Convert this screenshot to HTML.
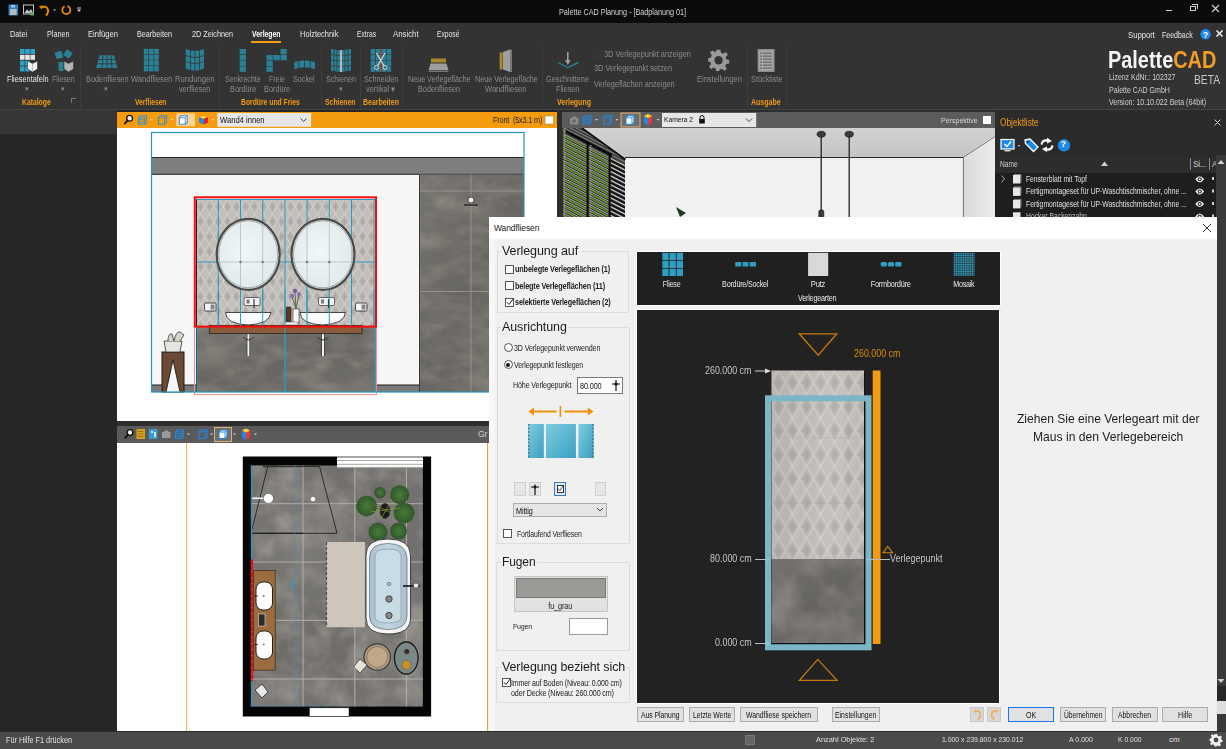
<!DOCTYPE html>
<html><head><meta charset="utf-8">
<style>
*{box-sizing:border-box}
html,body{margin:0;padding:0}
body{width:1226px;height:749px;overflow:hidden;position:relative;background:#262626;font-family:"Liberation Sans",sans-serif;}
.a{position:absolute}
.t{position:absolute;white-space:nowrap;line-height:1}
svg{position:absolute;overflow:hidden}
/* ribbon */
.rl{position:absolute;white-space:nowrap;font-size:8px;color:#8e8e8e;line-height:10px;text-align:center;letter-spacing:-0.1px}
.gl{position:absolute;white-space:nowrap;font-size:8.5px;color:#f39c12;line-height:10px;text-align:center;letter-spacing:-0.1px}
.sep{position:absolute;top:47px;width:1px;height:60px;background:#3e3e3e}
.tab{position:absolute;top:30px;font-size:8.5px;color:#e6e6e6;white-space:nowrap;line-height:10px;letter-spacing:-0.15px}
.btn{position:absolute;background:#e1e1e1;border:1px solid #adadad;font-size:8.5px;color:#111;text-align:center;line-height:14px;white-space:nowrap;letter-spacing:-0.2px}
.dl{position:absolute;white-space:nowrap;font-size:9px;color:#222;line-height:10px;letter-spacing:-0.15px}
.gh{position:absolute;white-space:nowrap;font-size:12.5px;color:#1b1b1b;line-height:14px;background:#f0f0f0;padding:0 1px;letter-spacing:-0.1px}
.gb{position:absolute;border:1px solid #dcdcdc}
.cb{position:absolute;width:9px;height:9px;border:1px solid #555;background:#fff}
</style></head>
<body>
<!-- title bar -->
<div class="a" style="left:0;top:0;width:1226px;height:23px;background:#0b0b0b"></div>
<div id="f_558.9_686" class="t" style="left:558.90px;top:8px;font-size:9px;color:#d4d4d4;transform:scaleX(0.801);transform-origin:left">Palette CAD Planung - [Badplanung 01]</div>

<!-- ribbon -->
<div class="a" style="left:0;top:23px;width:1226px;height:86px;background:#333333"></div>
<div class="a" style="left:0;top:109px;width:1226px;height:1px;background:#444"></div>


<!-- quick access -->
<svg style="left:0;top:0" width="100" height="23" viewBox="0 0 100 23">
 <rect x="8.5" y="4.5" width="9.5" height="11" fill="#2b7fc0"/>
 <rect x="10" y="9" width="6.5" height="6" fill="#b8b8b8"/>
 <rect x="11" y="5" width="4" height="2.5" fill="#9fc6e6"/>
 <rect x="23.5" y="5" width="10" height="9" fill="none" stroke="#c8c8c8" stroke-width="1"/>
 <path d="M24.5 13 L27 9.5 L29 11.5 L31 9 L33 13 Z" fill="#c8c8c8"/>
 <rect x="30.5" y="12" width="3.5" height="3.5" fill="#5fb05a"/>
 <path d="M41 7.5 Q47 5 48 10 Q48.5 13 46 15.5" fill="none" stroke="#e08a0a" stroke-width="2"/>
 <path d="M39 6 L43 5.5 L41.5 9.5 Z" fill="#e08a0a"/>
 <path d="M53 9.5 L56 9.5 L54.5 11 Z" fill="#cfcfcf"/>
 <circle cx="66.3" cy="10" r="4" fill="none" stroke="#e08a0a" stroke-width="1.8"/>
 <rect x="64.5" y="4.5" width="3" height="2.5" fill="#0b0b0b"/>
 <rect x="77" y="7.5" width="4" height="1" fill="#cfcfcf"/>
 <path d="M77 9.5 L81 9.5 L79 12 Z" fill="#cfcfcf"/>
</svg>
<!-- window controls -->
<div class="a" style="left:1166px;top:10px;width:6px;height:1px;background:#cfcfcf"></div>
<div class="a" style="left:1190px;top:6px;width:6px;height:5px;border:1px solid #cfcfcf"></div>
<div class="a" style="left:1192px;top:4px;width:6px;height:5px;border-top:1px solid #cfcfcf;border-right:1px solid #cfcfcf"></div>
<svg style="left:1211px;top:4px" width="9" height="9" viewBox="0 0 9 9"><path d="M1 1 L8 8 M8 1 L1 8" stroke="#d8d8d8" stroke-width="1.1"/></svg>

<!-- tabs -->
<div class="t" id="f_10.1_27.2" style="left:10.10px;top:30px;font-size:9px;color:#e6e6e6;transform:scaleX(0.814);transform-origin:left">Datei</div>
<div class="t" id="f_47_69.5" style="left:47.00px;top:30px;font-size:9px;color:#e6e6e6;transform:scaleX(0.803);transform-origin:left">Planen</div>
<div class="t" id="f_88_118" style="left:88.00px;top:30px;font-size:9px;color:#e6e6e6;transform:scaleX(0.844);transform-origin:left">Einfügen</div>
<div class="t" id="f_137_172" style="left:137.00px;top:30px;font-size:9px;color:#e6e6e6;transform:scaleX(0.804);transform-origin:left">Bearbeiten</div>
<div class="t" id="f_191.5_232.6" style="left:191.50px;top:30px;font-size:9px;color:#e6e6e6;transform:scaleX(0.805);transform-origin:left">2D Zeichnen</div>
<div class="t" id="f_251.5_280" style="left:251.50px;top:30px;font-size:9px;color:#ffffff;font-weight:bold;transform:scaleX(0.759);transform-origin:left">Verlegen</div>
<div class="a" style="left:250.5px;top:41px;width:30px;height:2px;background:#f39c12"></div>
<div class="t" id="f_299.5_338" style="left:299.50px;top:30px;font-size:9px;color:#e6e6e6;transform:scaleX(0.827);transform-origin:left">Holztechnik</div>
<div class="t" id="f_357_376" style="left:357.00px;top:30px;font-size:9px;color:#e6e6e6;transform:scaleX(0.745);transform-origin:left">Extras</div>
<div class="t" id="f_393_418.6" style="left:393.00px;top:30px;font-size:9px;color:#e6e6e6;transform:scaleX(0.867);transform-origin:left">Ansicht</div>
<div class="t" id="f_436.5_459" style="left:436.50px;top:30px;font-size:9px;color:#e6e6e6;transform:scaleX(0.749);transform-origin:left">Exposé</div>

<!-- ribbon separators -->
<div class="sep" style="left:80px"></div>
<div class="sep" style="left:219px"></div>
<div class="sep" style="left:321px"></div>
<div class="sep" style="left:360px"></div>
<div class="sep" style="left:402px"></div>
<div class="sep" style="left:542px"></div>
<div class="sep" style="left:747px"></div>
<div class="sep" style="left:786px"></div>

<!-- ribbon icons -->
<svg style="left:0;top:40px" width="800" height="40" viewBox="0 40 800 40">
 <g fill="#2ea3c8">
  <rect x="20" y="49" width="4.6" height="5"/><rect x="25.2" y="49" width="4.6" height="5"/><rect x="30.4" y="49" width="4.6" height="5"/>
  <rect x="20" y="60.6" width="4.6" height="5"/><rect x="25.2" y="60.6" width="4.6" height="5"/>
  <rect x="20" y="66.4" width="4.6" height="5"/><rect x="25.2" y="66.4" width="4.6" height="5"/>
 </g>
 <g fill="#e6e6e6">
  <rect x="20" y="54.8" width="4.6" height="5"/><rect x="25.2" y="54.8" width="4.6" height="5"/><rect x="30.4" y="54.8" width="4.6" height="5"/>
 </g>
 <path d="M27.5 61 L32.5 63.5 L37.5 61 L37.5 69 L32.5 72 L27.5 69 Z" fill="#f2f2f2" stroke="#333" stroke-width="0.6"/>
 <path d="M32.5 63.5 L32.5 72" stroke="#999" stroke-width="0.6"/>
 <!-- Fliesen -->
 <g fill="#2a8094">
  <rect x="55.5" y="51.5" width="7" height="7" transform="rotate(-15 59 55)"/>
  <rect x="64.5" y="50.5" width="7" height="7" transform="rotate(35 68 54)"/>
  <rect x="58.5" y="62" width="5" height="9"/>
 </g>
 <path d="M64 61 L68.5 63.5 L73.5 61 L73.5 69 L68.5 72 L64 69 Z" fill="#b4b4b4" stroke="#333" stroke-width="0.6"/>
 <!-- Bodenfliesen -->
 <path d="M99.7 55.2 L114 55.2 L117.5 68 L96.1 68 Z" fill="#2a8094"/>
 <path d="M98.6 59.5 L115.2 59.5 M97.4 63.8 L116.3 63.8 M103 55.2 L102 68 M107 55.2 L107 68 M111 55.2 L112 68" stroke="#333" stroke-width="0.8"/>
 <!-- Wandfliesen -->
 <g fill="#2a8094">
  <rect x="143.8" y="48.9" width="4.6" height="5.2"/><rect x="149" y="48.9" width="4.6" height="5.2"/><rect x="154.2" y="48.9" width="4.6" height="5.2"/>
  <rect x="143.8" y="54.6" width="4.6" height="5.2"/><rect x="149" y="54.6" width="4.6" height="5.2"/><rect x="154.2" y="54.6" width="4.6" height="5.2"/>
  <rect x="143.8" y="60.3" width="4.6" height="5.2"/><rect x="149" y="60.3" width="4.6" height="5.2"/><rect x="154.2" y="60.3" width="4.6" height="5.2"/>
  <rect x="143.8" y="66" width="4.6" height="5.4"/><rect x="149" y="66" width="4.6" height="5.4"/><rect x="154.2" y="66" width="4.6" height="5.4"/>
 </g>
 <!-- Rundungen -->
 <path d="M185.8 49 Q195 53 204 49 L204 68.5 Q195 73 185.8 68.5 Z" fill="#2a8094"/>
 <path d="M190.5 50.5 L190.5 70.5 M195 51.5 L195 71.5 M199.5 50.5 L199.5 70.5 M185.8 55.5 Q195 59.5 204 55.5 M185.8 61.5 Q195 65.5 204 61.5" stroke="#333" stroke-width="0.8" fill="none"/>
 <!-- Senkrechte -->
 <g fill="#2a8094">
  <rect x="239.6" y="49" width="6.3" height="5.3"/><rect x="239.6" y="54.8" width="6.3" height="5.3"/><rect x="239.6" y="60.6" width="6.3" height="5.3"/><rect x="239.6" y="66.4" width="6.3" height="5.4"/>
 </g>
 <!-- Freie -->
 <g fill="#2a8094">
  <rect x="280.5" y="49" width="6.3" height="5.3"/>
  <rect x="266.5" y="55" width="6.3" height="5.3"/><rect x="273.5" y="55" width="6.3" height="5.3"/><rect x="280.5" y="55" width="6.3" height="5.3"/>
  <rect x="266.5" y="61" width="6.3" height="5.3"/>
  <rect x="266.5" y="66.8" width="6.3" height="5"/>
 </g>
 <!-- Sockel -->
 <path d="M294.3 62 L299 61 L304.5 60.3 L310 61 L315 62 L315 69.2 L310 67.8 L304.5 67.2 L299 67.8 L294.3 69.2 Z" fill="#2a8094"/>
 <path d="M299 61 L299 67.8 M304.5 60.3 L304.5 67.2 M310 61 L310 67.8" stroke="#333" stroke-width="0.8"/>
 <!-- Schienen -->
 <path d="M331 49 L340 50.5 L340 72 L331 70.5 Z M342 50.5 L351 49 L351 70.5 L342 72 Z" fill="#2a8094"/>
 <path d="M331 54.5 L340 55.7 M331 60 L340 61 M331 65.5 L340 66.4 M342 55.7 L351 54.5 M342 61 L351 60 M342 66.4 L351 65.5 M334 49.5 L334 71 M337 50 L337 71.5 M345 50 L345 71.5 M348 49.5 L348 71" stroke="#333" stroke-width="0.7"/>
 <rect x="340" y="50" width="2" height="22" fill="#b8b8b8"/>
 <!-- Schneiden -->
 <g fill="#2a8094">
  <rect x="370.6" y="49" width="4.8" height="5.3"/><rect x="376" y="49" width="4.8" height="5.3"/><rect x="381.4" y="49" width="4.8" height="5.3"/><rect x="386.6" y="49" width="4.6" height="5.3"/>
  <rect x="370.6" y="54.8" width="4.8" height="5.3"/><rect x="376" y="54.8" width="4.8" height="5.3"/><rect x="381.4" y="54.8" width="4.8" height="5.3"/><rect x="386.6" y="54.8" width="4.6" height="5.3"/>
  <rect x="370.6" y="60.6" width="4.8" height="5.3"/><rect x="376" y="60.6" width="4.8" height="5.3"/><rect x="381.4" y="60.6" width="4.8" height="5.3"/><rect x="386.6" y="60.6" width="4.6" height="5.3"/>
  <rect x="370.6" y="66.4" width="4.8" height="5.4"/><rect x="376" y="66.4" width="4.8" height="5.4"/><rect x="381.4" y="66.4" width="4.8" height="5.4"/><rect x="386.6" y="66.4" width="4.6" height="5.4"/>
 </g>
 <rect x="380.3" y="49" width="1.2" height="23" fill="#c0392b"/>
 <path d="M376.5 53 L384 66 M385 53 L377.5 66" stroke="#d8d8d8" stroke-width="1.2"/>
 <circle cx="376.5" cy="67.5" r="2" fill="none" stroke="#d8d8d8" stroke-width="1"/>
 <circle cx="385" cy="67.5" r="2" fill="none" stroke="#d8d8d8" stroke-width="1"/>
 <!-- Neue Verlegefläche Boden -->
 <path d="M431 58.5 L446 58.5 L446 62.5 L431 62.5 Z" fill="#a88c2a"/>
 <path d="M430.5 63.5 L446.5 63.5 L448.4 70 L428.7 70 Z" fill="#9e9e9e"/>
 <rect x="428.7" y="70.5" width="19.7" height="1.5" fill="#777"/>
 <!-- Neue Verlegefläche Wand -->
 <rect x="499.6" y="52.5" width="3" height="17" fill="#a88c2a"/>
 <path d="M503 52 L510 49.5 L510 72 L503 69.5 Z" fill="#9e9e9e"/>
 <rect x="510" y="49.5" width="2" height="22.5" fill="#777"/>
 <!-- Geschnittene -->
 <rect x="567" y="52" width="1.6" height="9" fill="#a0a0a0"/>
 <path d="M565 60 L570.6 60 L567.8 65 Z" fill="#a0a0a0"/>
 <path d="M558 62.5 L567.8 67.5 L578.5 62.5" fill="none" stroke="#2a8094" stroke-width="1.4"/>
 <!-- checkbox dim -->
 <rect x="594.5" y="50.5" width="7" height="8" fill="none" stroke="#3a3a3a" stroke-width="1"/>
 <!-- gear -->
 <g transform="translate(718.6 60.2)">
  <path d="M-1.8 -10.5 L1.8 -10.5 L2.4 -7.5 L4.6 -6.5 L7.2 -8.2 L9.2 -5.6 L7.2 -3.3 L7.6 -1 L10.5 -0.2 L10.5 3.2 L7.5 3.8 L6.6 6 L8.3 8.6 L5.7 10.6 L3.4 8.6 L1.2 9.4 L0.5 10.8 L-2.5 10.8 L-3 8.3 L-5 7.3 L-7.6 9 L-9.6 6.4 L-7.6 4 L-8.2 1.8 L-10.5 1.2 L-10.5 -2 L-7.7 -2.8 L-6.8 -5 L-8.6 -7.6 L-6 -9.6 L-3.6 -7.6 Z" fill="#9a9a9a"/>
  <circle cx="0" cy="0" r="4.2" fill="#333"/>
 </g>
 <!-- Stückliste -->
 <rect x="757.6" y="49" width="17" height="23" fill="#8e8e8e"/>
 <rect x="759" y="50.5" width="14.2" height="20" fill="#a8a8a8"/>
 <g fill="#6a6a6a">
  <rect x="760" y="52.5" width="2" height="1.3"/><rect x="763" y="52.5" width="9" height="1.3"/>
  <rect x="760" y="55.5" width="2" height="1.3"/><rect x="763" y="55.5" width="9" height="1.3"/>
  <rect x="760" y="58.5" width="2" height="1.3"/><rect x="763" y="58.5" width="9" height="1.3"/>
  <rect x="760" y="61.5" width="2" height="1.3"/><rect x="763" y="61.5" width="9" height="1.3"/>
  <rect x="760" y="64.5" width="2" height="1.3"/><rect x="763" y="64.5" width="9" height="1.3"/>
  <rect x="760" y="67.5" width="2" height="1.3"/><rect x="763" y="67.5" width="9" height="1.3"/>
 </g>
</svg>

<!-- ribbon labels -->
<div class="t" id="f_6.8_48.4" style="left:6.80px;top:75px;font-size:8.5px;color:#e8e8e8;transform:scaleX(0.863);transform-origin:left">Fliesentafeln</div>
<div class="t" id="f_52.4_75" style="left:52.40px;top:75px;font-size:8.5px;color:#8c8c8c;transform:scaleX(0.825);transform-origin:left">Fliesen</div>
<div class="t" id="f_85.8_128.3" style="left:85.80px;top:75px;font-size:8.5px;color:#8c8c8c;transform:scaleX(0.865);transform-origin:left">Bodenfliesen</div>
<div class="t" id="f_131_172.3" style="left:131.00px;top:75px;font-size:8.5px;color:#8c8c8c;transform:scaleX(0.889);transform-origin:left">Wandfliesen</div>
<div class="t" id="f_175_214.4" style="left:175.00px;top:75px;font-size:8.5px;color:#8c8c8c;transform:scaleX(0.896);transform-origin:left">Rundungen</div>
<div class="t" id="f_225.3_261" style="left:225.30px;top:75px;font-size:8.5px;color:#8c8c8c;transform:scaleX(0.830);transform-origin:left">Senkrechte</div>
<div class="t" id="f_269.2_285" style="left:269.20px;top:75px;font-size:8.5px;color:#8c8c8c;transform:scaleX(0.815);transform-origin:left">Freie</div>
<div class="t" id="f_293.4_315" style="left:293.40px;top:75px;font-size:8.5px;color:#8c8c8c;transform:scaleX(0.847);transform-origin:left">Sockel</div>
<div class="t" id="f_326.3_356.2" style="left:326.30px;top:75px;font-size:8.5px;color:#8c8c8c;transform:scaleX(0.843);transform-origin:left">Schienen</div>
<div class="t" id="f_364_398.4" style="left:364.00px;top:75px;font-size:8.5px;color:#8c8c8c;transform:scaleX(0.856);transform-origin:left">Schneiden</div>
<div class="t" id="f_407.5_470" style="left:407.50px;top:75px;font-size:8.5px;color:#8c8c8c;transform:scaleX(0.842);transform-origin:left">Neue Verlegefläche</div>
<div class="t" id="f_474.5_537.3" style="left:474.50px;top:75px;font-size:8.5px;color:#8c8c8c;transform:scaleX(0.846);transform-origin:left">Neue Verlegefläche</div>
<div class="t" id="f_546_589" style="left:546.00px;top:75px;font-size:8.5px;color:#8c8c8c;transform:scaleX(0.858);transform-origin:left">Geschnittene</div>
<div class="t" id="f_696.6_741.5" style="left:696.60px;top:75px;font-size:8.5px;color:#8c8c8c;transform:scaleX(0.880);transform-origin:left">Einstellungen</div>
<div class="t" id="f_751.4_782.8" style="left:751.40px;top:75px;font-size:8.5px;color:#8c8c8c;transform:scaleX(0.863);transform-origin:left">Stückliste</div>
<div class="t" id="f_179.4_210.8" style="left:179.40px;top:85px;font-size:8.5px;color:#8c8c8c;transform:scaleX(0.863);transform-origin:left">verfliesen</div>
<div class="t" id="f_230_256.3" style="left:230.00px;top:85px;font-size:8.5px;color:#8c8c8c;transform:scaleX(0.869);transform-origin:left">Bordüre</div>
<div class="t" id="f_263.8_289.8" style="left:263.80px;top:85px;font-size:8.5px;color:#8c8c8c;transform:scaleX(0.860);transform-origin:left">Bordüre</div>
<div class="t" id="f_366_395.7" style="left:366.00px;top:85px;font-size:8.5px;color:#8c8c8c;transform:scaleX(0.866);transform-origin:left">vertikal ▾</div>
<div class="t" id="f_418_460" style="left:418.00px;top:85px;font-size:8.5px;color:#8c8c8c;transform:scaleX(0.854);transform-origin:left">Bodenfliesen</div>
<div class="t" id="f_485_526.5" style="left:485.00px;top:85px;font-size:8.5px;color:#8c8c8c;transform:scaleX(0.893);transform-origin:left">Wandfliesen</div>
<div class="t" id="f_556_579.4" style="left:556.00px;top:85px;font-size:8.5px;color:#8c8c8c;transform:scaleX(0.854);transform-origin:left">Fliesen</div>
<div class="t" id="f_604.2_691.2" style="left:604.20px;top:50px;font-size:8.5px;color:#8c8c8c;transform:scaleX(0.872);transform-origin:left">3D Verlegepunkt anzeigen</div>
<div class="t" id="f_593.5_671.5" style="left:593.50px;top:64.2px;font-size:8.5px;color:#8c8c8c;transform:scaleX(0.864);transform-origin:left">3D Verlegepunkt setzen</div>
<div class="t" id="f_593.5_674.2" style="left:593.50px;top:80px;font-size:8.5px;color:#8c8c8c;transform:scaleX(0.867);transform-origin:left">Verlegeflächen anzeigen</div>
<div class="t" id="f_21.9_50.6" style="left:21.90px;top:97.8px;font-size:8.8px;color:#f39c12;font-weight:bold;transform:scaleX(0.772);transform-origin:left">Kataloge</div>
<div class="t" id="f_134.6_166" style="left:134.60px;top:97.8px;font-size:8.8px;color:#f39c12;font-weight:bold;transform:scaleX(0.755);transform-origin:left">Verfliesen</div>
<div class="t" id="f_240.9_299.7" style="left:240.90px;top:97.8px;font-size:8.8px;color:#f39c12;font-weight:bold;transform:scaleX(0.771);transform-origin:left">Bordüre und Fries</div>
<div class="t" id="f_324.8_355.3" style="left:324.80px;top:97.8px;font-size:8.8px;color:#f39c12;font-weight:bold;transform:scaleX(0.780);transform-origin:left">Schienen</div>
<div class="t" id="f_362.5_398.4" style="left:362.50px;top:97.8px;font-size:8.8px;color:#f39c12;font-weight:bold;transform:scaleX(0.790);transform-origin:left">Bearbeiten</div>
<div class="t" id="f_557_591" style="left:557.00px;top:97.8px;font-size:8.8px;color:#f39c12;font-weight:bold;transform:scaleX(0.799);transform-origin:left">Verlegung</div>
<div class="t" id="f_751.4_781" style="left:751.40px;top:97.8px;font-size:8.8px;color:#f39c12;font-weight:bold;transform:scaleX(0.797);transform-origin:left">Ausgabe</div>
<div class="t" style="left:25px;top:85px;font-size:7px;color:#8a8a8a">▾</div>
<div class="t" style="left:61px;top:85px;font-size:7px;color:#8a8a8a">▾</div>
<div class="t" style="left:104px;top:85px;font-size:7px;color:#8a8a8a">▾</div>
<div class="t" style="left:339px;top:85px;font-size:7px;color:#8a8a8a">▾</div>

<div class="a" style="left:71px;top:98px;width:5px;height:5px;border-left:1px solid #777;border-top:1px solid #777"></div>

<!-- logo area -->
<div id="f_1127.5_1154.5" class="t" style="left:1127.50px;top:31px;font-size:8.5px;color:#e6e6e6;transform:scaleX(0.907);transform-origin:left">Support</div>
<div id="f_1161.9_1192.6" class="t" style="left:1161.90px;top:31px;font-size:8.5px;color:#e6e6e6;transform:scaleX(0.822);transform-origin:left">Feedback</div>
<svg style="left:1199px;top:28px" width="14" height="13" viewBox="0 0 14 13"><circle cx="6.5" cy="6.3" r="5.2" fill="#1e88e5"/><text x="6.5" y="9.8" font-size="9" font-weight="bold" fill="#fff" text-anchor="middle" font-family="Liberation Sans">?</text></svg>
<svg style="left:1215px;top:29px" width="9" height="9" viewBox="0 0 9 9"><path d="M1.5 1.5 L7.5 7.5 M7.5 1.5 L1.5 7.5" stroke="#f0f0f0" stroke-width="1.5"/></svg>
<div class="t" style="left:1107.5px;top:49.3px;font-size:23px;color:#f4f4f4;letter-spacing:0px;font-weight:bold;transform:scaleX(0.865);transform-origin:left">Palette<span style="color:#f39c27">CAD</span></div>
<div class="t" style="left:1193.5px;top:72.5px;font-size:13.5px;color:#c8c8c8;transform:scaleX(0.76);transform-origin:left">BETA</div>
<div id="f_1109_1175.4" class="t" style="left:1109.00px;top:73px;font-size:8.5px;color:#d0d0d0;transform:scaleX(0.817);transform-origin:left">Lizenz KdNr.: 102327</div>
<div id="f_1109_1169.9" class="t" style="left:1109.00px;top:85.5px;font-size:8.5px;color:#d0d0d0;transform:scaleX(0.826);transform-origin:left">Palette CAD GmbH</div>
<div id="f_1109_1206" class="t" style="left:1109.00px;top:98px;font-size:8.5px;color:#d0d0d0;transform:scaleX(0.828);transform-origin:left">Version: 10.10.022 Beta (64bit)</div>
<!-- left panel -->
<div class="a" style="left:0;top:110px;width:117px;height:24px;background:#363636"></div>

<!-- front viewport -->
<div class="a" style="left:117px;top:112px;width:440px;height:16px;background:#f59c0e"></div>
<div class="a" style="left:117px;top:128px;width:440px;height:293px;background:#ffffff"></div>


<!-- front view content -->
<svg style="left:117px;top:128px" width="440" height="293" viewBox="117 128 440 293">
 <defs>
  <pattern id="dia" x="196" y="199" width="9" height="15" patternUnits="userSpaceOnUse">
   <rect width="9" height="15" fill="#c2beba"/>
   <path d="M4.5 0 L9 7.5 L4.5 15 L0 7.5 Z" fill="#bab6b2" stroke="#d4d0cc" stroke-width="1"/>
   <path d="M4.5 4 L6.6 7.5 L4.5 11 L2.4 7.5 Z" fill="#aeaaa7"/>
  </pattern>
  <linearGradient id="stone1" x1="0" y1="0" x2="1" y2="1">
   <stop offset="0" stop-color="#76746f"/><stop offset="0.5" stop-color="#676561"/><stop offset="1" stop-color="#73716c"/>
  </linearGradient>
  <filter id="stoneF" x="0" y="0" width="100%" height="100%" color-interpolation-filters="sRGB">
   <feTurbulence type="fractalNoise" baseFrequency="0.03 0.06" numOctaves="4" seed="7" result="n"/>
   <feColorMatrix in="n" type="matrix" values="0 0 0 0 0.6  0 0 0 0 0.58  0 0 0 0 0.55  1.1 1.1 1.1 0 -1.4" result="m"/>
   <feComposite in="m" in2="SourceGraphic" operator="in"/>
  </filter>
  <radialGradient id="mir" cx="0.45" cy="0.45" r="0.6"><stop offset="0" stop-color="#f2f7f7"/><stop offset="1" stop-color="#dde9ea"/></radialGradient>
 </defs>
 <rect x="117" y="128" width="440" height="293" fill="#ffffff"/>
 <!-- wall -->
 <rect x="152" y="175" width="372" height="217" fill="#f6f6f6"/>
 <!-- gray band -->
 <rect x="152" y="157" width="372" height="17.6" fill="#7f7f7f"/>
 <path d="M152 157.5 H524 M152 174.3 H524" stroke="#2b2b2b" stroke-width="1"/>
 <!-- baseboard -->
 <rect x="152" y="385" width="267" height="7" fill="#7b7a78"/>
 <path d="M152 385 H419" stroke="#1e1e1e" stroke-width="1"/>
 <!-- shower stone -->
 <rect x="419.5" y="174.6" width="104.5" height="217.4" fill="url(#stone1)"/>
 <rect x="419.5" y="174.6" width="104.5" height="217.4" fill="#fff" filter="url(#stoneF)" opacity="0.65"/>
 <path d="M419.5 191 H524 M419.5 291.5 H524 M471 174.6 V392" stroke="#96938f" stroke-width="1"/>
 <path d="M419.5 174.6 V392" stroke="#3a3a3a" stroke-width="1"/>
 <!-- shower head -->
 <circle cx="471" cy="200" r="3" fill="#f0f0f0" stroke="#333" stroke-width="0.8"/>
 <path d="M464 205 H478" stroke="#333" stroke-width="1.6"/>
 <!-- tiled section -->
 <rect x="196" y="199" width="180" height="127.5" fill="url(#dia)"/>
 <rect x="196" y="326.5" width="180" height="65.5" fill="url(#stone1)"/>
 <rect x="196" y="326.5" width="180" height="65.5" fill="#fff" filter="url(#stoneF)" opacity="0.65"/>
 <path d="M196.5 199 V392" stroke="#1a1a1a" stroke-width="1"/>
 <!-- blue grid -->
 <g stroke="#2a9ac0" stroke-width="1" fill="none">
  <path d="M196.5 199.5 H376 M196.5 262 H376"/>
  <path d="M218.3 199 V326 M240.5 199 V326 M262.7 199 V326 M307 199 V326 M329.3 199 V326 M351.5 199 V326 M374 199 V326"/>
  <path d="M285 199 V392 M197 326 V392 M375.5 326 V392"/>
 </g>
 <g fill="#777"><circle cx="240.5" cy="262" r="1.1"/><circle cx="262.7" cy="262" r="1.1"/><circle cx="307" cy="262" r="1.1"/><circle cx="329.3" cy="262" r="1.1"/></g>
 <!-- mirrors -->
 <ellipse cx="248.2" cy="254.3" rx="31.5" ry="35.5" fill="url(#mir)" stroke="#4a4a4a" stroke-width="2.2"/>
 <ellipse cx="248.2" cy="254.3" rx="29.5" ry="33.5" fill="none" stroke="#8a8a8a" stroke-width="0.7"/>
 <ellipse cx="323" cy="254.3" rx="31.5" ry="35.5" fill="url(#mir)" stroke="#4a4a4a" stroke-width="2.2"/>
 <ellipse cx="323" cy="254.3" rx="29.5" ry="33.5" fill="none" stroke="#8a8a8a" stroke-width="0.7"/>
 <clipPath id="mclip"><ellipse cx="248.2" cy="254.3" rx="30" ry="34"/><ellipse cx="323" cy="254.3" rx="30" ry="34"/></clipPath>
 <g clip-path="url(#mclip)" stroke="#b5bcbe" stroke-width="0.8">
  <path d="M218.3 199 V326 M240.5 199 V326 M262.7 199 V326 M307 199 V326 M329.3 199 V326 M351.5 199 V326 M196 262 H376"/>
 </g>
 <g fill="#777"><circle cx="240.5" cy="262" r="1.2"/><circle cx="262.7" cy="262" r="1.2"/><circle cx="307" cy="262" r="1.2"/><circle cx="329.3" cy="262" r="1.2"/></g>
 <!-- faucets -->
 <rect x="244" y="297.5" width="16" height="8" rx="1.5" fill="#f4f4f4" stroke="#444" stroke-width="0.8"/>
 <rect x="246.5" y="299.5" width="3" height="4" fill="#777"/><path d="M254 299 V308" stroke="#333" stroke-width="1.2"/>
 <rect x="318.5" y="297.5" width="16" height="8" rx="1.5" fill="#f4f4f4" stroke="#444" stroke-width="0.8"/>
 <rect x="321" y="299.5" width="3" height="4" fill="#777"/><path d="M328.5 299 V308" stroke="#333" stroke-width="1.2"/>
 <!-- switches -->
 <rect x="204.5" y="303" width="11.5" height="8" rx="1.2" fill="#f4f4f4" stroke="#333" stroke-width="0.9"/><rect x="210.5" y="304.5" width="4" height="5" fill="#888"/>
 <rect x="355.5" y="303" width="11.5" height="8" rx="1.2" fill="#f4f4f4" stroke="#333" stroke-width="0.9"/><rect x="361.5" y="304.5" width="4" height="5" fill="#888"/>
 <!-- sinks -->
 <path d="M225.5 312.5 H271 Q270 324 248 325 Q226 324 225.5 312.5 Z" fill="#fbfbfb" stroke="#333" stroke-width="0.9"/>
 <path d="M300 312.5 H345.5 Q344.5 324 322.7 325 Q300.5 324 300 312.5 Z" fill="#fbfbfb" stroke="#333" stroke-width="0.9"/>
 <!-- bottle + plant -->
 <rect x="286" y="307" width="5" height="16" rx="1" fill="#5a3a22" stroke="#222" stroke-width="0.6"/>
 <rect x="293" y="309" width="6" height="14" fill="#fafafa" stroke="#333" stroke-width="0.6"/>
 <path d="M296 309 L292 296 M296 309 L299 294 M296 309 L295 292" stroke="#5a6a4a" stroke-width="1"/>
 <circle cx="292" cy="296" r="2.2" fill="#8a6fb0"/><circle cx="299" cy="294" r="2" fill="#8a6fb0"/><circle cx="295" cy="291" r="2.2" fill="#7a5fa0"/>
 <rect x="284" y="322" width="14" height="3" fill="#f0f0f0" stroke="#555" stroke-width="0.5"/>
 <!-- vanity -->
 <rect x="209.4" y="325.5" width="152.6" height="8" fill="#8b5b3b" stroke="#2a2a2a" stroke-width="0.9"/>
 <!-- siphons -->
 <path d="M248.4 334 V356" stroke="#333" stroke-width="3.4"/><path d="M248.4 334 V356" stroke="#f2f2f2" stroke-width="2"/>
 <path d="M243 337 Q248.4 343 254 337" stroke="#333" stroke-width="1" fill="none"/>
 <path d="M323 334 V356" stroke="#333" stroke-width="3.4"/><path d="M323 334 V356" stroke="#f2f2f2" stroke-width="2"/>
 <path d="M317.5 337 Q323 343 328.5 337" stroke="#333" stroke-width="1" fill="none"/>
 <g stroke="#2a9ac0" stroke-width="1" fill="none">
  <path d="M218.3 290 V326 M240.5 290 V326 M262.7 290 V326 M285 290 V392 M307 290 V326 M329.3 290 V326 M351.5 290 V326 M374 290 V326"/>
 </g>
 <!-- red frames -->
 <rect x="194.5" y="197.3" width="181.9" height="197.3" fill="none" stroke="#f08a8a" stroke-width="1"/>
 <rect x="194.8" y="197.3" width="181.2" height="129.3" fill="none" stroke="#ff0a0a" stroke-width="2"/>
 <!-- stool -->
 <rect x="162" y="352" width="22" height="40" fill="#6a4a32" stroke="#1a1a1a" stroke-width="1"/>
 <path d="M166 392 L173 360 L180 392" fill="#f6f6f6" stroke="#1a1a1a" stroke-width="0.9"/>
 <path d="M164 341 H182 L180 352 H166 Z" fill="#e4e4e0" stroke="#333" stroke-width="0.8"/>
 <path d="M168 341 Q168 333 172 334 L174 341 M174 341 Q176 331 180 332 L184 335 L180 341" fill="#d8d4cc" stroke="#333" stroke-width="0.8"/>
 <!-- blue frame -->
 <rect x="151.5" y="132.5" width="372.5" height="259.5" fill="none" stroke="#2496bf" stroke-width="1.2"/>
</svg>

<!-- 3d viewport -->
<div class="a" style="left:557px;top:110px;width:438px;height:311px;background:#2d2d2d"></div>
<div class="a" style="left:562px;top:112px;width:433px;height:16px;background:#5c5c5c"></div>
<div class="a" style="left:562px;top:128px;width:433px;height:93px;background:#f2f2f2"></div>


<svg style="left:562px;top:128px" width="433" height="93" viewBox="562 128 433 93">
 <defs>
  <linearGradient id="ceil" x1="0" y1="0" x2="0" y2="1"><stop offset="0" stop-color="#d2d2d2"/><stop offset="1" stop-color="#c4c4c4"/></linearGradient>
  <linearGradient id="rwall" x1="0" y1="0" x2="1" y2="0"><stop offset="0" stop-color="#dadada"/><stop offset="1" stop-color="#ececec"/></linearGradient>
  <pattern id="slat" x="562" y="128" width="63" height="4.4" patternUnits="userSpaceOnUse" patternTransform="skewY(27)">
   <rect width="63" height="4.4" fill="#1c1f1a"/>
   <rect y="0" width="63" height="1.2" fill="#a9a9ad"/>
   <rect y="1.9" width="63" height="1.6" fill="#6a9a2a"/>
  </pattern>
  <pattern id="slat2" x="562" y="128" width="63" height="4.4" patternUnits="userSpaceOnUse" patternTransform="skewY(27)">
   <rect width="63" height="4.4" fill="#151515"/>
   <rect y="0" width="63" height="1.5" fill="#d0d0d0"/>
  </pattern>
  <pattern id="slat3" x="562" y="128" width="63" height="3" patternUnits="userSpaceOnUse" patternTransform="skewY(27)">
   <rect width="63" height="3" fill="#3a3a3a"/>
   <rect y="0" width="63" height="1" fill="#8a8a8a"/>
  </pattern>
 </defs>
 <rect x="562" y="128" width="433" height="93" fill="#f1f1f1"/>
 <path d="M582 128 H995 V137 L963.4 157.5 H625 Z" fill="url(#ceil)"/>
 <path d="M625 157.5 H963.4 L995 137" stroke="#2a2a2a" stroke-width="1" fill="none"/>
 <path d="M963.4 157.5 L995 137 V221 H963.4 Z" fill="url(#rwall)"/>
 <path d="M963.4 157.5 V221" stroke="#555" stroke-width="0.8"/>
 <!-- blind -->
 <path d="M562 128 H582 L625 159 V221 H562 Z" fill="url(#slat)"/>
 <path d="M610.5 158 L625 165 V221 H610.5 Z" fill="url(#slat2)"/>
 <path d="M564 128 H582 L625 159 L625 164 L566 134.5 Z" fill="url(#slat3)"/>
 <path d="M566 131.5 L612 155.5" stroke="#050505" stroke-width="2.2"/>
 <path d="M582 128 L625.5 159.5" stroke="#0a0a0a" stroke-width="1.6"/>
 <path d="M587.6 143 V221 M609.6 154 V221" stroke="#050505" stroke-width="2"/>
 <path d="M564.7 128 V221 M590.7 145 V221" stroke="#9a9a9a" stroke-width="1.3" stroke-dasharray="1.2 1"/>
 <path d="M562.5 128 V221" stroke="#333" stroke-width="1"/>
 <!-- leaf -->
 <path d="M676 207 L686 213 L680 217 Z" fill="#1f3a24"/>
 <!-- pendants -->
 <path d="M821.2 134 V221 M849.2 134 V221" stroke="#222" stroke-width="1.3"/>
 <ellipse cx="821.2" cy="134.2" rx="4.2" ry="3" fill="#3a3a3a" stroke="#111" stroke-width="0.6"/>
 <ellipse cx="849.2" cy="134.2" rx="4.2" ry="3" fill="#3a3a3a" stroke="#111" stroke-width="0.6"/>
 <rect x="818.8" y="210" width="5" height="8" rx="1.5" fill="#3a3a3a" stroke="#111" stroke-width="0.6"/>
</svg>
<!-- 3D toolbar -->
<svg style="left:562px;top:112px" width="433" height="16" viewBox="562 112 433 16">
 <path d="M570 118 h2 l1 -1.5 h3 l1 1.5 h1.5 v6.5 h-8.5 Z" fill="#8a8a8a"/>
 <circle cx="574" cy="121" r="1.8" fill="#646464"/>
 <g transform="translate(582.5 115.3)"><path d="M0.5 2.5 L2.5 0.5 H8.5 V7 L6.5 9 H0.5 Z" fill="none" stroke="#1e88e5" stroke-width="1.1" stroke-linejoin="round"/><path d="M0.5 2.5 H6.5 V9 M6.5 2.5 L8.5 0.5" fill="none" stroke="#1e88e5" stroke-width="0.9"/><rect x="2" y="4" width="3" height="3.2" fill="none" stroke="#1e88e5" stroke-width="0.8"/></g><g transform="translate(603 115.3)"><path d="M0.5 2.5 L2.5 0.5 H8.5 V7 L6.5 9 H0.5 Z" fill="none" stroke="#1e88e5" stroke-width="1.1" stroke-linejoin="round"/><path d="M0.5 2.5 H6.5 V9 M6.5 2.5 L8.5 0.5" fill="none" stroke="#1e88e5" stroke-width="0.9"/></g>
 <path d="M595 119 h3 l-1.5 1.8 Z M615.5 119 h3 l-1.5 1.8 Z M636 119 h3 l-1.5 1.8 Z M656.5 119 h3 l-1.5 1.8 Z" fill="#cfcfcf"/>
 <rect x="621" y="113" width="19" height="14" fill="#6e6e6e" stroke="#e0b070" stroke-width="1"/>
 <g transform="translate(625.5 115.3)"><path d="M0.5 2.5 L2.5 0.5 H8.5 V7 L6.5 9 H0.5 Z" fill="#ffffff" stroke="#1e88e5" stroke-width="1.1" stroke-linejoin="round"/><path d="M0.5 2.5 H6.5 V9 M6.5 2.5 L8.5 0.5" fill="none" stroke="#1e88e5" stroke-width="0.9"/></g>
 <path d="M644 116 L648 114 L652 116 V123 L648 125.5 V118 Z" fill="#e53935"/>
 <path d="M644 116 L648 118 V125.5 L644 123 Z" fill="#1e88e5"/>
 <path d="M644 116 L648 114 L652 116 L648 118 Z" fill="#fdd835"/>
 <rect x="662" y="113" width="94.2" height="14" fill="#e6e6e6"/>
 <path d="M746 118.5 L749 121.5 L752 118.5" fill="none" stroke="#444" stroke-width="1"/>
 <rect x="983" y="116" width="8" height="8" fill="#ffffff"/>
</svg>
<div id="f_664.3_693.4" class="t" style="left:664.30px;top:116px;font-size:8px;color:#111;transform:scaleX(0.839);transform-origin:left">Kamera 2</div>
<svg style="left:697.5px;top:115px" width="8" height="10" viewBox="0 0 8 10"><path d="M2 4 V2.5 A2 2 0 0 1 6 2.5 V4" fill="none" stroke="#111" stroke-width="1"/><rect x="1.2" y="4" width="5.6" height="4.5" fill="#111"/></svg>
<div id="f_941_977.8" class="t" style="left:941.00px;top:117px;font-size:8px;color:#d8d8d8;transform:scaleX(0.880);transform-origin:left">Perspektive</div>

<!-- front toolbar -->
<svg style="left:117px;top:112px" width="440" height="16" viewBox="117 112 440 16">
 <circle cx="129.6" cy="118.2" r="2.9" fill="#fff" stroke="#111" stroke-width="1.3"/>
 <path d="M127.5 120.5 L124.8 123.6" stroke="#111" stroke-width="1.8" stroke-linecap="round"/>
 <g transform="translate(138 115.3)"><path d="M0.5 2.5 L2.5 0.5 H8.5 V7 L6.5 9 H0.5 Z" fill="none" stroke="#3a8fc8" stroke-width="1.1" stroke-linejoin="round"/><path d="M0.5 2.5 H6.5 V9 M6.5 2.5 L8.5 0.5" fill="none" stroke="#3a8fc8" stroke-width="0.9"/><rect x="2" y="4" width="3" height="3.2" fill="none" stroke="#3a8fc8" stroke-width="0.8"/></g><g transform="translate(158 115.3)"><path d="M0.5 2.5 L2.5 0.5 H8.5 V7 L6.5 9 H0.5 Z" fill="none" stroke="#3a8fc8" stroke-width="1.1" stroke-linejoin="round"/><path d="M0.5 2.5 H6.5 V9 M6.5 2.5 L8.5 0.5" fill="none" stroke="#3a8fc8" stroke-width="0.9"/></g>
 <path d="M150 119 h3 l-1.5 1.8 Z M170.5 119 h3 l-1.5 1.8 Z M190.5 119 h3 l-1.5 1.8 Z M211.5 119 h3 l-1.5 1.8 Z" fill="#f9d39a"/>
 <rect x="176.3" y="113.3" width="18.7" height="13" fill="#fbd296"/>
 <g transform="translate(178.7 115.3)"><path d="M0.5 2.5 L2.5 0.5 H8.5 V7 L6.5 9 H0.5 Z" fill="#ffffff" stroke="#3a8fc8" stroke-width="1.1" stroke-linejoin="round"/><path d="M0.5 2.5 H6.5 V9 M6.5 2.5 L8.5 0.5" fill="none" stroke="#3a8fc8" stroke-width="0.9"/></g>
 <path d="M199.1 117 L203.5 115.3 L208.1 117 V122.5 L203.6 124.5 V118.8 Z" fill="#e02020"/>
 <path d="M199.1 117 L203.6 118.8 V124.5 L199.1 122.7 Z" fill="#1e88e5"/>
 <path d="M199.1 117 L203.5 115.3 L208.1 117 L203.6 118.8 Z" fill="#fdd835"/>
 <rect x="217.4" y="113" width="93.7" height="13.8" fill="#e6e6e6"/>
 <path d="M300.5 118.5 L303.5 121.5 L306.5 118.5" fill="none" stroke="#444" stroke-width="1"/>
 <rect x="545" y="116" width="8.5" height="8" fill="#ffffff" stroke="#888" stroke-width="0.6"/>
</svg>
<div id="f_219.8_264.4" class="t" style="left:219.80px;top:116px;font-size:8.5px;color:#111;transform:scaleX(0.896);transform-origin:left">Wand4 innen</div>
<div class="t" style="left:492.7px;top:116px;font-size:8.5px;color:#222;letter-spacing:-0.2px;transform:scaleX(0.86);transform-origin:left">Front&nbsp; (5x3.1 m)</div>

<!-- bottom viewport -->
<div class="a" style="left:117px;top:421px;width:400px;height:5px;background:#2e2e2e"></div>
<div class="a" style="left:117px;top:426px;width:372px;height:17px;background:#5a5a5a"></div>
<div class="a" style="left:117px;top:443px;width:372px;height:288px;background:#ffffff"></div>


<!-- floor plan -->
<svg style="left:117px;top:443px" width="372" height="288" viewBox="117 443 372 288">
 <defs>
  <filter id="stoneF3" x="0" y="0" width="100%" height="100%" color-interpolation-filters="sRGB">
   <feTurbulence type="fractalNoise" baseFrequency="0.04" numOctaves="3" seed="11" result="n"/>
   <feColorMatrix in="n" type="matrix" values="0 0 0 0 0.6  0 0 0 0 0.59  0 0 0 0 0.57  1.2 1.2 1.2 0 -1.5" result="m"/>
   <feComposite in="m" in2="SourceGraphic" operator="in"/>
  </filter>
  <radialGradient id="fst" cx="0.3" cy="0.3" r="0.9"><stop offset="0" stop-color="#7e7c79"/><stop offset="0.5" stop-color="#6e6c69"/><stop offset="1" stop-color="#787673"/></radialGradient>
  <radialGradient id="leaf" cx="0.5" cy="0.5" r="0.5"><stop offset="0" stop-color="#4a7a3a"/><stop offset="1" stop-color="#2f5a2a"/></radialGradient>
  <linearGradient id="tub" x1="0" y1="0" x2="1" y2="0"><stop offset="0" stop-color="#a9c0cc"/><stop offset="0.5" stop-color="#c4d8e2"/><stop offset="1" stop-color="#a9c0cc"/></linearGradient>
 </defs>
 <rect x="117" y="443" width="372" height="288" fill="#ffffff"/>
 <path d="M186.6 443 V731" stroke="#f0b860" stroke-width="1.2"/>
 <path d="M487.6 443 V731" stroke="#d8a050" stroke-width="1.2"/>
 <rect x="242.8" y="456.5" width="188.3" height="260" fill="#050505"/>
 <rect x="250.8" y="465.5" width="172" height="241" fill="url(#fst)"/>
 <rect x="250.8" y="465.5" width="172" height="241" fill="#fff" filter="url(#stoneF3)" opacity="0.85"/>
 <!-- tile grid -->
 <g stroke="#b3afab" stroke-width="1">
  <path d="M303 465.5 V706.5 M354.8 465.5 V706.5 M406.4 465.5 V706.5"/>
  <path d="M250.8 503.7 H422.8 M250.8 562 H422.8 M250.8 620.3 H422.8 M250.8 679 H422.8"/>
 </g>
 <!-- window -->
 <rect x="337" y="456.7" width="86" height="11" fill="#ffffff"/>
 <path d="M337 457.5 H423 M337 460.5 H423 M337 464.3 H423 M337 467.3 H423" stroke="#9a9a9a" stroke-width="0.9"/>
 <!-- shower -->
 <path d="M267.8 466.5 H319.5 L337 533.3 H251 Z" fill="none" stroke="#222" stroke-width="0.9"/>
 <path d="M251 533.3 H303" stroke="#222" stroke-width="1.3"/>
 <path d="M263 466.5 H300" stroke="#333" stroke-width="1.6"/>
 <path d="M251 498.3 H264" stroke="#f4f4f4" stroke-width="1.6"/>
 <circle cx="268.4" cy="498.5" r="5" fill="#ffffff" stroke="#444" stroke-width="0.5"/>
 <circle cx="313" cy="499" r="2.6" fill="#ffffff" stroke="#444" stroke-width="0.4"/>
 <path d="M251.6 465.5 V706.5" stroke="#1f9ac0" stroke-width="1.2"/>
 <path d="M294.3 466 V706" stroke="#2a9ac0" stroke-width="1" stroke-dasharray="1.5 1.5"/>
 <path d="M252 706 H330" stroke="#2a9ac0" stroke-width="0.8" stroke-dasharray="1.5 1.5"/>
 <!-- plant -->
 <g fill="url(#leaf)" stroke="#2a4a24" stroke-width="1.2" stroke-dasharray="1 1">
  <circle cx="380" cy="492.6" r="5.2"/>
  <circle cx="366.6" cy="506" r="10"/>
  <circle cx="399.7" cy="494.7" r="9"/>
  <circle cx="404" cy="513" r="10"/>
  <circle cx="378" cy="532" r="9"/>
  <circle cx="398.6" cy="531" r="8"/>
 </g>
 <ellipse cx="385" cy="511" rx="5" ry="7.5" fill="#1a1a1a" stroke="#333" stroke-width="0.8"/>
 <path d="M375 505 L395 515 M380 520 L392 500 M370 512 L400 508" stroke="#7a9a2a" stroke-width="0.8"/>
 <!-- rug -->
 <rect x="326.5" y="542" width="38.4" height="85.2" fill="#cfc6bb"/>
 <path d="M326.5 542 V627" stroke="#4a4a4a" stroke-width="1.2" stroke-dasharray="3 2"/>
 <!-- bathtub -->
 <path d="M366 555 Q366 539 388 539 Q410 539 410.5 555 V618 Q410.5 634 388 634 Q366 634 366 618 Z" fill="#f6f6f6" stroke="#333" stroke-width="0.9"/>
 <path d="M369.5 558 Q369.5 543.5 388 543.5 Q406.5 543.5 407 558 V616 Q407 629.5 388 629.5 Q369.5 629.5 369.5 616 Z" fill="url(#tub)" stroke="#5a6a74" stroke-width="0.7"/>
 <path d="M375 556 Q375 549 388 549 Q401 549 401 556 V617 Q401 623 388 623 Q375 623 375 617 Z" fill="#c8dce6" stroke="#6a7a84" stroke-width="0.5"/>
 <circle cx="389" cy="584" r="1.6" fill="none" stroke="#555" stroke-width="0.8"/>
 <circle cx="389" cy="599" r="3.2" fill="#888" stroke="#333" stroke-width="0.8"/>
 <circle cx="389" cy="615.5" r="3.2" fill="#888" stroke="#333" stroke-width="0.8"/>
 <path d="M403 586 H420" stroke="#111" stroke-width="1.6"/>
 <circle cx="416" cy="585.5" r="2.6" fill="#f0f0f0" stroke="#333" stroke-width="0.6"/>
 <!-- vanity -->
 <path d="M252 559.5 V681" stroke="#e01010" stroke-width="2.2"/>
 <path d="M252 565 V680" stroke="#f08080" stroke-width="0.8" stroke-dasharray="1 5"/>
 <rect x="253.5" y="570.6" width="21.7" height="99.6" fill="#9b6c3f" stroke="#3a2a1a" stroke-width="0.7"/>
 <rect x="256" y="582" width="16.5" height="28" rx="7" fill="#fdfdfd" stroke="#111" stroke-width="0.9"/>
 <rect x="256" y="631" width="16.5" height="28" rx="7" fill="#fdfdfd" stroke="#111" stroke-width="0.9"/>
 <circle cx="263.7" cy="596" r="1" fill="#777"/><circle cx="263.7" cy="644.5" r="1" fill="#777"/>
 <path d="M254 596 H258 M254 644.5 H258" stroke="#222" stroke-width="0.8"/>
 <rect x="258.5" y="614" width="6.5" height="12" fill="#2a2a2a" stroke="#ddd" stroke-width="0.6"/>
 <path d="M291 585 L294 578 L294 592 Z" fill="#2a9ac0" opacity="0.8"/>
 <!-- stool & table -->
 <circle cx="377.2" cy="657" r="13.2" fill="#b39a7e" stroke="#3a3a3a" stroke-width="1.2"/>
 <circle cx="377.2" cy="657" r="10.5" fill="#c0a78a" stroke="#6a5a4a" stroke-width="0.6"/>
 <path d="M353.5 667 L360 659 L367 665 L360 673 Z" fill="#e8e2d6" stroke="#333" stroke-width="0.7"/>
 <ellipse cx="406.3" cy="658" rx="11.8" ry="16" fill="#7a8886" stroke="#1a1a1a" stroke-width="1.3"/>
 <circle cx="406.8" cy="651.5" r="2.5" fill="#3a2a22"/>
 <circle cx="406.5" cy="665" r="4.5" fill="#c8922a" stroke="#444" stroke-width="0.4"/>
 <!-- basket bottom-left -->
 <path d="M255 690 L262 684 L268 692 L262 698 Z" fill="#e8e8e8" stroke="#222" stroke-width="0.8"/>
 <!-- door -->
 <rect x="309.3" y="707.8" width="39.7" height="8.5" fill="#ffffff" stroke="#222" stroke-width="0.6"/>
</svg>
<!-- bottom toolbar -->
<svg style="left:117px;top:426px" width="372" height="17" viewBox="117 426 372 17">
 <circle cx="130" cy="432.5" r="2.8" fill="#fff" stroke="#111" stroke-width="1.3"/>
 <path d="M128 434.7 L124.8 438.3" stroke="#111" stroke-width="1.8"/>
 <rect x="136.5" y="429" width="8.5" height="10" fill="#d4a017"/>
 <path d="M138 431.5 H143.5 M138 434 H143.5 M138 436.5 H143.5" stroke="#8a6a10" stroke-width="0.8"/>
 <rect x="149" y="429" width="8.5" height="10" fill="#3a9ad0"/>
 <rect x="151" y="431" width="2" height="2" fill="#cfe6f5"/><rect x="154" y="432" width="2" height="5" fill="#cfe6f5"/>
 <path d="M162 432 h2 l1 -1.5 h3 l1 1.5 h1.5 v6 h-8.5 Z" fill="#9a9a9a"/>
 <g transform="translate(175 429.5)"><path d="M0.5 2.5 L2.5 0.5 H8.5 V7 L6.5 9 H0.5 Z" fill="none" stroke="#1e88e5" stroke-width="1.1" stroke-linejoin="round"/><path d="M0.5 2.5 H6.5 V9 M6.5 2.5 L8.5 0.5" fill="none" stroke="#1e88e5" stroke-width="0.9"/><rect x="2" y="4" width="3" height="3.2" fill="none" stroke="#1e88e5" stroke-width="0.8"/></g><g transform="translate(198.5 429.5)"><path d="M0.5 2.5 L2.5 0.5 H8.5 V7 L6.5 9 H0.5 Z" fill="none" stroke="#1e88e5" stroke-width="1.1" stroke-linejoin="round"/><path d="M0.5 2.5 H6.5 V9 M6.5 2.5 L8.5 0.5" fill="none" stroke="#1e88e5" stroke-width="0.9"/></g>
 <path d="M187 433.5 h3 l-1.5 1.8 Z M210 433.5 h3 l-1.5 1.8 Z M233 433.5 h3 l-1.5 1.8 Z M254 433.5 h3 l-1.5 1.8 Z" fill="#cfcfcf"/>
 <rect x="214.5" y="427.5" width="17" height="14" fill="#6e6e6e" stroke="#e0b070" stroke-width="1"/>
 <g transform="translate(218.5 429.5)"><path d="M0.5 2.5 L2.5 0.5 H8.5 V7 L6.5 9 H0.5 Z" fill="#ffffff" stroke="#1e88e5" stroke-width="1.1" stroke-linejoin="round"/><path d="M0.5 2.5 H6.5 V9 M6.5 2.5 L8.5 0.5" fill="none" stroke="#1e88e5" stroke-width="0.9"/></g>
 <path d="M242 430.5 L246 428.5 L250 430.5 V437.5 L246 440 V432.5 Z" fill="#e53935"/>
 <path d="M242 430.5 L246 432.5 V440 L242 437.5 Z" fill="#1e88e5"/>
 <path d="M242 430.5 L246 428.5 L250 430.5 L246 432.5 Z" fill="#fdd835"/>
</svg>
<div class="t" style="left:478px;top:430px;font-size:8.5px;color:#d0d0d0">Gr</div>

<!-- objektliste -->
<div class="a" style="left:995px;top:110px;width:231px;height:622px;background:#2b2b2b"></div>

<!-- status bar -->
<div class="a" style="left:0;top:731px;width:1226px;height:18px;background:#4a4a4a"></div>


<!-- objektliste content -->
<div id="f_999.6_1038.3" class="t" style="left:999.60px;top:118px;font-size:10px;color:#f39c12;transform:scaleX(0.829);transform-origin:left">Objektliste</div>
<svg style="left:1213px;top:118px" width="9" height="9" viewBox="0 0 9 9"><path d="M1.5 1.5 L7.5 7.5 M7.5 1.5 L1.5 7.5" stroke="#cfcfcf" stroke-width="1"/></svg>
<svg style="left:995px;top:135px" width="231" height="20" viewBox="995 135 231 20">
 <rect x="1001" y="139.5" width="13" height="9.5" fill="#1e88e5" stroke="#ffffff" stroke-width="1.2"/>
 <rect x="1004.5" y="150" width="6" height="1.4" fill="#dcdcdc"/>
 <path d="M1004.5 144 L1007 146.5 L1011 141.5" fill="none" stroke="#fff" stroke-width="1.5"/>
 <path d="M1017.5 145 h3 l-1.5 1.8 Z" fill="#bbb"/>
 <path d="M1025 140 L1030 139 L1038 147 L1033.5 151.5 L1025.5 143.5 Z" fill="#1e88e5" stroke="#fff" stroke-width="1.3"/>
 <circle cx="1027.8" cy="141.8" r="0.9" fill="#111"/>
 <path d="M1041.5 144.5 Q1042.5 139.5 1048 140.5" fill="none" stroke="#fff" stroke-width="2.2"/>
 <path d="M1047 137.8 L1052 141 L1047 143.6 Z" fill="#fff"/>
 <path d="M1052.5 145.5 Q1051.5 150.5 1046 149.5" fill="none" stroke="#fff" stroke-width="2.2"/>
 <path d="M1047 152.2 L1042 149 L1047 146.4 Z" fill="#fff"/>
 <circle cx="1064" cy="145.3" r="6.2" fill="#1e88e5"/>
</svg>
<div class="t" style="left:1060.5px;top:140px;font-size:9px;font-weight:bold;color:#fff">?</div>
<div class="a" style="left:995px;top:156px;width:221px;height:16px;background:#2d2d2d"></div>
<div id="f_1000.3_1018" class="t" style="left:1000.30px;top:160px;font-size:8.5px;color:#cfcfcf;transform:scaleX(0.780);transform-origin:left">Name</div>
<svg style="left:1100px;top:160px" width="9" height="7" viewBox="0 0 9 7"><path d="M1 6 L4.5 1.5 L8 6 Z" fill="#cfcfcf"/></svg>
<div class="a" style="left:1189.5px;top:158px;width:1px;height:12px;background:#888"></div>
<div class="t" style="left:1193px;top:160px;font-size:8.5px;color:#cfcfcf;letter-spacing:-0.4px">Si...</div>
<div class="a" style="left:1208.5px;top:158px;width:1px;height:12px;background:#888"></div>
<div class="t" style="left:1212px;top:160px;font-size:8.5px;color:#cfcfcf">A</div>
<div class="a" style="left:995px;top:172.5px;width:221px;height:45px;background:#1e1e1e"></div>
<div class="a" style="left:1216px;top:155px;width:10px;height:577px;background:#3a3a3a"></div>
<svg style="left:1216px;top:158px" width="10" height="8" viewBox="0 0 10 8"><path d="M1.5 6 L5 2 L8.5 6 Z" fill="#d0d0d0"/></svg>
<svg style="left:1216px;top:677px" width="10" height="8" viewBox="0 0 10 8"><path d="M1.5 2 L5 6 L8.5 2 Z" fill="#d0d0d0"/></svg>
<div class="a" style="left:1216px;top:686px;width:10px;height:15px;background:#262626"></div>
<div class="a" style="left:1216px;top:701px;width:10px;height:13px;background:#dedede"></div>
<svg style="left:995px;top:172px" width="221" height="46" viewBox="995 172 221 46">
 <path d="M1001.5 175.5 L1004.5 179 L1001.5 182.5" fill="none" stroke="#aaa" stroke-width="1"/>
 <g fill="#e8e8e8">
  <rect x="1013" y="175" width="7.5" height="8.5"/><rect x="1013" y="187.4" width="7.5" height="8.5"/><rect x="1013" y="199.9" width="7.5" height="8.5"/><rect x="1013" y="212.3" width="7.5" height="8.5"/>
 </g>
 <g fill="none" stroke="#9a9a9a" stroke-width="0.8">
  <path d="M1014 174.5 H1021 V182"/><path d="M1014 186.9 H1021 V194.4"/><path d="M1014 199.4 H1021 V206.9"/>
 </g>
<path d="M1195.3 179.2 Q1199.7 173.2 1204.1 179.2 Q1199.7 185.2 1195.3 179.2 Z" fill="#f2f2f2"/><circle cx="1199.7" cy="179.2" r="2" fill="#1e1e1e"/><circle cx="1199.7" cy="179.2" r="1" fill="#f2f2f2"/><path d="M1195.3 191.6 Q1199.7 185.6 1204.1 191.6 Q1199.7 197.6 1195.3 191.6 Z" fill="#f2f2f2"/><circle cx="1199.7" cy="191.6" r="2" fill="#1e1e1e"/><circle cx="1199.7" cy="191.6" r="1" fill="#f2f2f2"/><path d="M1195.3 204 Q1199.7 198 1204.1 204 Q1199.7 210 1195.3 204 Z" fill="#f2f2f2"/><circle cx="1199.7" cy="204" r="2" fill="#1e1e1e"/><circle cx="1199.7" cy="204" r="1" fill="#f2f2f2"/><path d="M1195.3 216.4 Q1199.7 210.4 1204.1 216.4 Q1199.7 222.4 1195.3 216.4 Z" fill="#f2f2f2"/><circle cx="1199.7" cy="216.4" r="2" fill="#1e1e1e"/><circle cx="1199.7" cy="216.4" r="1" fill="#f2f2f2"/>
 <g fill="#cfcfcf"><rect x="1212" y="177" width="2" height="3"/><rect x="1212" y="189.5" width="2" height="3"/><rect x="1212" y="202" width="2" height="3"/><rect x="1212" y="214.5" width="2" height="3"/></g>
</svg>
<div id="f_1025.5_1086.4" class="t" style="left:1025.50px;top:175px;font-size:8.5px;color:#e0e0e0;transform:scaleX(0.792);transform-origin:left">Fensterblatt mit Topf</div>
<div id="f_1025.5_1186.3" class="t" style="left:1025.50px;top:187.4px;font-size:8.5px;color:#e0e0e0;transform:scaleX(0.800);transform-origin:left">Fertigmontageset für UP-Waschtischmischer, ohne ...</div>
<div id="f_1025.5_1186.31" class="t" style="left:1025.50px;top:199.9px;font-size:8.5px;color:#e0e0e0;transform:scaleX(0.800);transform-origin:left">Fertigmontageset für UP-Waschtischmischer, ohne ...</div>
<div class="t" style="left:1025.5px;top:212.3px;font-size:8.5px;color:#c0c0c0;transform:scaleX(0.8);transform-origin:left">Hocker Backenzahn</div>

<!-- status bar content -->
<div class="a" style="left:0;top:731px;width:1226px;height:1px;background:#2e2e2e"></div>
<div id="f_5.7_71.8" class="t" style="left:5.70px;top:736px;font-size:8.5px;color:#e0e0e0;transform:scaleX(0.858);transform-origin:left">Für Hilfe F1 drücken</div>
<div class="a" style="left:745px;top:735px;width:10px;height:10px;background:#666;border:1px solid #777"></div>
<div id="f_815.7_874" class="t" style="left:815.70px;top:736px;font-size:8px;color:#e0e0e0;transform:scaleX(0.923);transform-origin:left">Anzahl Objekte: 2</div>
<div id="f_942_1023.3" class="t" style="left:942.00px;top:736px;font-size:8px;color:#e0e0e0;transform:scaleX(0.858);transform-origin:left">1.000 x 239.800 x 230.012</div>
<div id="f_1068.7_1092.7" class="t" style="left:1068.70px;top:736px;font-size:8px;color:#e0e0e0;transform:scaleX(0.884);transform-origin:left">A 0.000</div>
<div id="f_1118.3_1141.8" class="t" style="left:1118.30px;top:736px;font-size:8px;color:#e0e0e0;transform:scaleX(0.852);transform-origin:left">K 0.000</div>
<div class="t" style="left:1169px;top:736px;font-size:8px;color:#e0e0e0">cm</div>
<svg style="left:1209px;top:733px" width="14" height="14" viewBox="-7 -7 14 14">
 <path d="M-1.2 -6 L1.2 -6 L1.6 -4.3 L3 -3.6 L4.4 -4.6 L6 -3 L5 -1.6 L5.5 -0.3 L6.5 0 L6.5 1.9 L4.7 2.3 L4.1 3.6 L5 5 L3.4 6.4 L2 5.4 L0.8 5.9 L0.5 6.5 L-1.5 6.5 L-1.8 4.9 L-3 4.3 L-4.6 5.3 L-6 3.7 L-5 2.3 L-5.4 1.1 L-6.5 0.7 L-6.5 -1.2 L-4.8 -1.7 L-4.2 -3 L-5.2 -4.5 L-3.6 -5.9 L-2.2 -4.6 Z" fill="#f0f0f0"/>
 <circle r="2.4" fill="#4a4a4a"/>
</svg>


<!-- dialog -->
<div class="a" style="left:489px;top:217px;width:728px;height:513.5px;background:#f0f0f0"></div>
<div class="a" style="left:489px;top:239px;width:6px;height:491px;background:#f7f7f7"></div>
<div class="a" style="left:489px;top:217px;width:728px;height:22px;background:#ffffff"></div>
<div class="t" style="left:494px;top:223.5px;font-size:8.5px;color:#222;letter-spacing:-0.1px">Wandfliesen</div>
<svg style="left:1201px;top:221.5px" width="12" height="12" viewBox="0 0 12 12"><path d="M2 2 L10 10 M10 2 L2 10" stroke="#333" stroke-width="1"/></svg>

<!-- group boxes -->
<div class="gb" style="left:496.6px;top:250.8px;width:132.5px;height:62.5px"></div>
<div id="f_502.3_578.4" class="gh" style="left:501.30px;top:244px;transform:scaleX(1.003);transform-origin:left">Verlegung auf</div>
<div class="cb" style="left:505.2px;top:264.5px"></div>
<div class="cb" style="left:505.2px;top:281.2px"></div>
<div class="cb" style="left:505.2px;top:297.5px"></div>
<svg style="left:505px;top:297px" width="10" height="10" viewBox="0 0 10 10"><path d="M1.8 5.2 L4 7.5 L8.3 1.8" fill="none" stroke="#222" stroke-width="1"/></svg>
<div id="f_515_610" class="dl" style="left:515.00px;top:264px;font-weight:bold;font-size:8.5px;transform:scaleX(0.855);transform-origin:left">unbelegte Verlegeflächen (1)</div>
<div id="f_515_605" class="dl" style="left:515.00px;top:280.7px;font-weight:bold;font-size:8.5px;transform:scaleX(0.856);transform-origin:left">belegte Verlegeflächen (11)</div>
<div id="f_515_610.5" class="dl" style="left:515.00px;top:297px;font-weight:bold;font-size:8.5px;transform:scaleX(0.848);transform-origin:left">selektierte Verlegeflächen (2)</div>

<div class="gb" style="left:496.6px;top:327px;width:133px;height:217px"></div>
<div id="f_502.3_567" class="gh" style="left:501.30px;top:320px;transform:scaleX(0.997);transform-origin:left">Ausrichtung</div>
<div class="a" style="left:503.7px;top:343px;width:9px;height:9px;border-radius:50%;border:1px solid #555;background:#fff"></div>
<div class="a" style="left:503.7px;top:360px;width:9px;height:9px;border-radius:50%;border:1px solid #555;background:#fff"></div>
<div class="a" style="left:506.2px;top:362.5px;width:4px;height:4px;border-radius:50%;background:#111"></div>
<div id="f_513.7_600" class="dl" style="left:513.70px;top:342.5px;transform:scaleX(0.789);transform-origin:left">3D Verlegepunkt verwenden</div>
<div id="f_513.7_582.8" class="dl" style="left:513.70px;top:359.5px;transform:scaleX(0.783);transform-origin:left">Verlegepunkt festlegen</div>
<div id="f_513_571.4" class="dl" style="left:513.00px;top:379.5px;transform:scaleX(0.789);transform-origin:left">Höhe Verlegepunkt</div>
<div class="a" style="left:577.1px;top:377.4px;width:45.7px;height:16.2px;background:#fff;border:1px solid #7a7a7a"></div>
<div id="f_580.3_601.8" class="dl" style="left:580.30px;top:380.5px;color:#111;transform:scaleX(0.807);transform-origin:left">80.000</div>
<svg style="left:610px;top:378px" width="12" height="15" viewBox="0 0 12 15"><path d="M6 2 V13 M2 6 H10" stroke="#111" stroke-width="1.2"/><circle cx="6" cy="6" r="1.6" fill="#111"/></svg>
<svg style="left:525px;top:403px" width="72" height="58" viewBox="525 403 72 58">
 <defs><linearGradient id="tg" x1="0" y1="0" x2="1" y2="1"><stop offset="0" stop-color="#7fcde0"/><stop offset="1" stop-color="#3a9fc0"/></linearGradient></defs>
 <path d="M533 411.5 H556.5 M564.5 411.5 H588.5" stroke="#f0900a" stroke-width="1.8"/>
 <path d="M528.3 411.5 L534 407.5 V415.5 Z M593.5 411.5 L587.8 407.5 V415.5 Z" fill="#f0900a"/>
 <path d="M560.4 406 V417" stroke="#f0900a" stroke-width="1.6"/>
 <rect x="528.3" y="424" width="15.5" height="34" fill="url(#tg)"/>
 <rect x="545.9" y="424" width="30" height="34" fill="url(#tg)"/>
 <rect x="578.4" y="424" width="15.1" height="34" fill="url(#tg)"/>
 <path d="M528.8 424 V458 M593 424 V458" stroke="#1f4a5a" stroke-width="0.9" stroke-dasharray="2 1.5"/>
</svg>
<div class="a" style="left:514.2px;top:481.9px;width:11.6px;height:14.1px;background:#e6e6e6;border:1px solid #cfcfcf"></div>
<div class="a" style="left:529.3px;top:481.9px;width:11.4px;height:14.1px;background:#e6e6e6;border:1px solid #cfcfcf"></div>
<svg style="left:529px;top:482px" width="12" height="14" viewBox="0 0 12 14"><path d="M6 2.5 V13 M2 5 H10" stroke="#111" stroke-width="1.2"/><circle cx="6" cy="5" r="1.5" fill="#111"/></svg>
<div class="a" style="left:554.2px;top:481.9px;width:11.8px;height:14.1px;background:#dde8f3;border:1px solid #3a7ac8"></div>
<div class="a" style="left:556.5px;top:484.5px;width:7.5px;height:8px;background:#fff;border:1px solid #333"></div>
<svg style="left:556px;top:484px" width="9" height="9" viewBox="0 0 9 9"><path d="M2 4.5 L3.8 6.5 L7 2.2" fill="none" stroke="#333" stroke-width="0.9"/></svg>
<div class="a" style="left:594.9px;top:481.9px;width:11.6px;height:14.1px;background:#e6e6e6;border:1px solid #cfcfcf"></div>
<div class="a" style="left:513.4px;top:502.6px;width:94.1px;height:14.9px;background:#e5e5e5;border:1px solid #adadad"></div>
<div id="f_515.8_532.4" class="dl" style="left:515.80px;top:506px;color:#111;transform:scaleX(0.805);transform-origin:left">Mittig</div>
<svg style="left:595px;top:505px" width="10" height="9" viewBox="0 0 10 9"><path d="M2 3 L5 6 L8 3" fill="none" stroke="#444" stroke-width="1"/></svg>
<div class="cb" style="left:503px;top:529px"></div>
<div id="f_516.9_581.5" class="dl" style="left:516.90px;top:528.5px;transform:scaleX(0.767);transform-origin:left">Fortlaufend Verfliesen</div>

<div class="gb" style="left:496.4px;top:561.8px;width:134px;height:89.5px"></div>
<div id="f_501.9_535.5" class="gh" style="left:500.94px;top:555px;transform:scaleX(0.961);transform-origin:left">Fugen</div>
<div class="a" style="left:513.7px;top:575.9px;width:93.9px;height:35.8px;background:#e1e1e1;border:1px solid #c4c4c4"></div>
<div class="a" style="left:515.5px;top:578.4px;width:90.5px;height:19.6px;background:#9a9996;border:1px solid #7a7a78"></div>
<div id="f_547.8_571.8" class="dl" style="left:521.59px;top:600.5px;width:93.9px;text-align:center;color:#222;transform:scaleX(0.814);transform-origin:left">fu_grau</div>
<div id="f_512.5_531.5" class="dl" style="left:512.50px;top:621.5px;font-size:7.5px;letter-spacing:-0.2px;transform:scaleX(0.937);transform-origin:left">Fugen</div>
<div class="a" style="left:569.3px;top:618.4px;width:38.3px;height:16.8px;background:#fff;border:1px solid #9a9a9a"></div>

<div class="gb" style="left:496.4px;top:666.8px;width:134px;height:36.4px"></div>
<div id="f_501.9_625" class="gh" style="left:500.90px;top:660px;transform:scaleX(0.996);transform-origin:left">Verlegung bezieht sich</div>
<div class="cb" style="left:501.9px;top:677.5px"></div>
<svg style="left:502px;top:677px" width="10" height="10" viewBox="0 0 10 10"><path d="M1.8 5.2 L4 7.5 L8.3 1.8" fill="none" stroke="#222" stroke-width="1"/></svg>
<div id="f_511.2_622" class="dl" style="left:511.20px;top:677.5px;font-size:8.5px;transform:scaleX(0.825);transform-origin:left">Immer auf Boden (Niveau: 0.000 cm)</div>
<div id="f_511_613.8" class="dl" style="left:511.00px;top:687.5px;font-size:8.5px;transform:scaleX(0.840);transform-origin:left">oder Decke (Niveau: 260.000 cm)</div>

<!-- Verlegearten panel -->
<div class="a" style="left:636px;top:250.5px;width:364.5px;height:55.5px;background:#202020;border:1px solid #ffffff"></div>
<svg style="left:637px;top:251px" width="363" height="54" viewBox="637 251 363 54">
 <g fill="#2f9ec0">
  <rect x="662.3" y="252.8" width="6.3" height="7.2"/><rect x="669.5" y="252.8" width="6.3" height="7.2"/><rect x="676.7" y="252.8" width="6.3" height="7.2"/>
  <rect x="662.3" y="260.8" width="6.3" height="7.2"/><rect x="669.5" y="260.8" width="6.3" height="7.2"/><rect x="676.7" y="260.8" width="6.3" height="7.2"/>
  <rect x="662.3" y="268.8" width="6.3" height="7.2"/><rect x="669.5" y="268.8" width="6.3" height="7.2"/><rect x="676.7" y="268.8" width="6.3" height="7.2"/>
  <rect x="735.2" y="262" width="6" height="4.5"/><rect x="742.5" y="262" width="6" height="4.5"/><rect x="749.8" y="262" width="6.2" height="4.5"/>
  <rect x="880.7" y="262" width="6.3" height="4.5" rx="1.5"/><rect x="887.9" y="262" width="6.3" height="4.5" rx="1.5"/><rect x="895.1" y="262" width="6.5" height="4.5" rx="1.5"/>
 </g>
 <rect x="808.1" y="252.8" width="20.1" height="23.2" fill="#d9d9d9"/>
 <rect x="953.8" y="252.8" width="20.7" height="23.2" fill="#35a3c4"/>
 <path d="M955.3 252.8 V276 M957.6 252.8 V276 M959.9 252.8 V276 M962.2 252.8 V276 M964.5 252.8 V276 M966.8 252.8 V276 M969.1 252.8 V276 M971.4 252.8 V276 M973.7 252.8 V276 M953.8 254.3 H974.5 M953.8 256.6 H974.5 M953.8 258.9 H974.5 M953.8 261.2 H974.5 M953.8 263.5 H974.5 M953.8 265.8 H974.5 M953.8 268.1 H974.5 M953.8 270.4 H974.5 M953.8 272.7 H974.5 M953.8 275 H974.5" stroke="#202020" stroke-width="0.55"/>
</svg>
<div id="f_663_680.6" class="dl" style="left:655.17px;top:279px;width:42px;text-align:center;color:#e8e8e8;letter-spacing:-0.3px;transform:scaleX(0.792);transform-origin:left">Fliese</div>
<div id="f_721.7_767.8" class="dl" style="left:716.61px;top:279px;width:70px;text-align:center;color:#e8e8e8;letter-spacing:-0.3px;transform:scaleX(0.804);transform-origin:left">Bordüre/Sockel</div>
<div id="f_810.7_825" class="dl" style="left:800.84px;top:279px;width:40px;text-align:center;color:#e8e8e8;letter-spacing:-0.3px;transform:scaleX(0.851);transform-origin:left">Putz</div>
<div id="f_870.6_910.5" class="dl" style="left:861.89px;top:279px;width:70px;text-align:center;color:#e8e8e8;letter-spacing:-0.3px;transform:scaleX(0.819);transform-origin:left">Formbordüre</div>
<div id="f_953_974.2" class="dl" style="left:947.73px;top:279px;width:40px;text-align:center;color:#e8e8e8;letter-spacing:-0.3px;transform:scaleX(0.793);transform-origin:left">Mosaik</div>
<div id="f_798_836.3" class="dl" style="left:792.94px;top:293px;width:60px;text-align:center;color:#e8e8e8;letter-spacing:-0.3px;transform:scaleX(0.807);transform-origin:left">Verlegearten</div>

<!-- preview panel -->
<div class="a" style="left:636px;top:308.5px;width:364px;height:395px;background:#222222;border:1px solid #ffffff"></div>
<svg style="left:637px;top:309.5px" width="362" height="393" viewBox="637 309.5 362 393">
 <defs>
  <pattern id="dia2" x="771.5" y="370" width="14" height="24" patternUnits="userSpaceOnUse">
   <rect width="14" height="24" fill="#c0bcb8"/>
   <path d="M7 0 L14 12 L7 24 L0 12 Z" fill="#b9b5b1" stroke="#d2cec9" stroke-width="1.3"/>
   <path d="M7 6 L10.4 12 L7 18 L3.6 12 Z" fill="#adaaa6"/>
  </pattern>
  <filter id="stoneF2" x="0" y="0" width="100%" height="100%" color-interpolation-filters="sRGB">
   <feTurbulence type="fractalNoise" baseFrequency="0.03" numOctaves="3" seed="3" result="n"/>
   <feColorMatrix in="n" type="matrix" values="0 0 0 0 0.56  0 0 0 0 0.55  0 0 0 0 0.53  1.2 1.2 1.2 0 -1.5" result="m"/>
   <feComposite in="m" in2="SourceGraphic" operator="in"/>
  </filter>
  <linearGradient id="stone2" x1="0" y1="0" x2="1" y2="1"><stop offset="0" stop-color="#74726e"/><stop offset="0.5" stop-color="#666461"/><stop offset="1" stop-color="#706e6a"/></linearGradient>
 </defs>
 <path d="M799.2 333.3 H836.8 L818.2 354.8 Z" fill="none" stroke="#c47a0a" stroke-width="1.3"/>
 <rect x="771.5" y="370" width="93" height="189" fill="url(#dia2)"/>
 <rect x="771.5" y="370" width="18" height="189" fill="#8a8682" opacity="0.12"/><rect x="817" y="370" width="27" height="189" fill="#ffffff" opacity="0.08"/><path d="M771.5 437 H864.5 M771.5 503 H864.5" stroke="#aaa6a2" stroke-width="0.8" opacity="0.5"/>
 <rect x="771.5" y="559" width="93" height="84" fill="url(#stone2)"/>
 <rect x="771.5" y="559" width="93" height="84" fill="#fff" filter="url(#stoneF2)" opacity="0.8"/>
 <path d="M864.5 370 V643 H771.5" stroke="#111" stroke-width="1" fill="none"/>
 <rect x="768" y="397.8" width="100.5" height="249" fill="none" stroke="#7ab6c8" stroke-width="6"/>
 <rect x="872.7" y="370" width="7.8" height="273.5" fill="#f39c12"/>
 <path d="M755 370.5 H768" stroke="#cfcfcf" stroke-width="1"/>
 <path d="M771 370.5 L765 368 V373 Z" fill="#e0e0e0"/>
 <path d="M755 559 H770 M755 643 H770 M871 559 H890" stroke="#bdbdbd" stroke-width="1"/>
 <path d="M771 559 L766.5 556.8 V561.2 Z M771 643 L766.5 640.8 V645.2 Z M866 559 L870.5 556.8 V561.2 Z" fill="#8ac4d6"/>
 <path d="M883 552.2 H892.6 L887.7 545.9 Z" fill="none" stroke="#d08810" stroke-width="1.1"/>
 <path d="M799.4 679.8 H837 L817.8 658.9 Z" fill="none" stroke="#c47a0a" stroke-width="1.3"/>
</svg>
<div id="f_853.5_899.9" class="t" style="left:853.50px;top:349px;font-size:10px;color:#d98b0e;transform:scaleX(0.888);transform-origin:left">260.000 cm</div>
<div id="f_705.3_751.7" class="t" style="left:705.30px;top:365.5px;font-size:10px;color:#c4c4c4;transform:scaleX(0.888);transform-origin:left">260.000 cm</div>
<div id="f_710_751.7" class="t" style="left:710.00px;top:554px;font-size:10px;color:#c4c4c4;transform:scaleX(0.893);transform-origin:left">80.000 cm</div>
<div id="f_715_751.7" class="t" style="left:715.00px;top:638px;font-size:10px;color:#c4c4c4;transform:scaleX(0.892);transform-origin:left">0.000 cm</div>
<div id="f_890.1_942.6" class="t" style="left:890.10px;top:554px;font-size:10px;color:#c4c4c4;transform:scaleX(0.899);transform-origin:left">Verlegepunkt</div>

<!-- info text -->
<div id="f_1017_1199.5" class="t" style="left:1017.00px;top:411.8px;font-size:13px;color:#1e1e1e;transform:scaleX(0.928);transform-origin:left">Ziehen Sie eine Verlegeart mit der</div>
<div id="f_1033.2_1183.4" class="t" style="left:1033.20px;top:429.8px;font-size:13px;color:#1e1e1e;transform:scaleX(0.932);transform-origin:left">Maus in den Verlegebereich</div>
<!-- buttons -->
<div class="btn" style="left:636.9px;top:707.4px;width:46.9px;height:14.6px"></div>
<div class="btn" style="left:688.7px;top:707.4px;width:46.5px;height:14.6px"></div>
<div class="btn" style="left:740.1px;top:707.4px;width:77.5px;height:14.6px"></div>
<div class="btn" style="left:832.4px;top:707.4px;width:47.6px;height:14.6px"></div>
<div class="a" style="left:970.4px;top:707.4px;width:13.9px;height:14.6px;background:#d8d8d8;border:1px solid #c8c8c8"></div>
<div class="a" style="left:987.1px;top:707.4px;width:13.7px;height:14.6px;background:#d8d8d8;border:1px solid #c8c8c8"></div>
<svg style="left:970px;top:707px" width="32" height="15" viewBox="0 0 32 15">
 <path d="M5 4.5 Q10.5 3 10.5 8 Q10.5 11 7.5 12.5" fill="none" stroke="#f0b060" stroke-width="1.8"/>
 <path d="M3 3.5 L6.5 2.5 L5.8 6.5 Z" fill="#f0b060"/>
 <path d="M27 4.5 Q21.5 3 21.5 8 Q21.5 11 24.5 12.5" fill="none" stroke="#f0b060" stroke-width="1.8"/>
 <path d="M29 3.5 L25.5 2.5 L26.2 6.5 Z" fill="#f0b060"/>
</svg>
<div class="btn" style="left:1008.2px;top:707.4px;width:46.2px;height:14.6px;border:1.5px solid #1a73e8;line-height:13px"></div>
<div class="btn" style="left:1060.2px;top:707.4px;width:46.3px;height:14.6px"></div>
<div class="btn" style="left:1111.9px;top:707.4px;width:46px;height:14.6px"></div>
<div class="btn" style="left:1162.2px;top:707.4px;width:46.2px;height:14.6px"></div>

<div class="t" id="f_640.6_679" style="left:640.60px;top:710.8px;font-size:8.5px;color:#111;transform:scaleX(0.797);transform-origin:left">Aus Planung</div>
<div class="t" id="f_692.8_731.1" style="left:692.80px;top:710.8px;font-size:8.5px;color:#111;transform:scaleX(0.797);transform-origin:left">Letzte Werte</div>
<div class="t" id="f_745.8_811" style="left:745.80px;top:710.8px;font-size:8.5px;color:#111;transform:scaleX(0.805);transform-origin:left">Wandfliese speichern</div>
<div class="t" id="f_835_876.3" style="left:835.00px;top:710.8px;font-size:8.5px;color:#111;transform:scaleX(0.809);transform-origin:left">Einstellungen</div>
<div class="t" id="f_1026.2_1036.4" style="left:1026.20px;top:710.8px;font-size:8.5px;color:#111;transform:scaleX(0.831);transform-origin:left">OK</div>
<div class="t" id="f_1063.7_1102.1" style="left:1063.70px;top:710.8px;font-size:8.5px;color:#111;transform:scaleX(0.781);transform-origin:left">Übernehmen</div>
<div class="t" id="f_1118_1151" style="left:1118.00px;top:710.8px;font-size:8.5px;color:#111;transform:scaleX(0.802);transform-origin:left">Abbrechen</div>
<div class="t" id="f_1178_1192.2" style="left:1178.00px;top:710.8px;font-size:8.5px;color:#111;transform:scaleX(0.835);transform-origin:left">Hilfe</div>
</body></html>
